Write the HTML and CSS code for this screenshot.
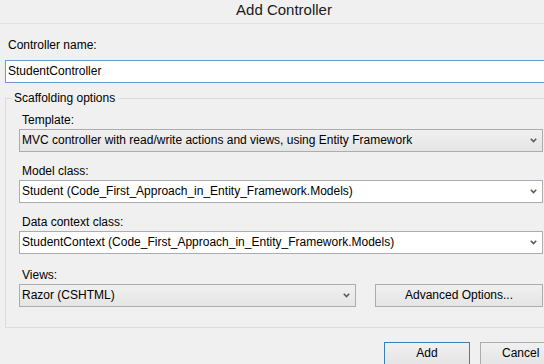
FILE: index.html
```html
<!DOCTYPE html>
<html>
<head>
<meta charset="utf-8">
<title>Add Controller</title>
<link rel="stylesheet" href="styles.css">
</head>
<body>
<div class="dialog">
  <div class="titlebar">Add Controller</div>
  <div class="content">
    <label class="name-label" for="name">Controller name:</label>
    <div class="textbox" id="name">StudentController</div>

    <fieldset class="group">
      <legend>Scaffolding options</legend>
      <div class="group-body">
        <div class="field">
          <label>Template:</label>
          <div class="combo readonly wide">
            <span>MVC controller with read/write actions and views, using Entity Framework</span>
            <svg class="arrow" width="7" height="5" viewBox="0 0 7 5"><path d="M0.8 0.8 L3.5 3.6 L6.2 0.8" fill="none" stroke="#5a5a5a" stroke-width="1.6"/></svg>
          </div>
        </div>
        <div class="field">
          <label>Model class:</label>
          <div class="combo wide">
            <span>Student (Code_First_Approach_in_Entity_Framework.Models)</span>
            <svg class="arrow" width="7" height="5" viewBox="0 0 7 5"><path d="M0.8 0.8 L3.5 3.6 L6.2 0.8" fill="none" stroke="#5a5a5a" stroke-width="1.6"/></svg>
          </div>
        </div>
        <div class="field">
          <label>Data context class:</label>
          <div class="combo wide">
            <span>StudentContext (Code_First_Approach_in_Entity_Framework.Models)</span>
            <svg class="arrow" width="7" height="5" viewBox="0 0 7 5"><path d="M0.8 0.8 L3.5 3.6 L6.2 0.8" fill="none" stroke="#5a5a5a" stroke-width="1.6"/></svg>
          </div>
        </div>
        <div class="field views">
          <label>Views:</label>
          <div class="views-row">
            <div class="combo readonly narrow">
              <span>Razor (CSHTML)</span>
              <svg class="arrow" width="7" height="5" viewBox="0 0 7 5"><path d="M0.8 0.8 L3.5 3.6 L6.2 0.8" fill="none" stroke="#5a5a5a" stroke-width="1.6"/></svg>
            </div>
            <button class="btn advanced" type="button">Advanced Options...</button>
          </div>
        </div>
      </div>
    </fieldset>

    <div class="actions">
      <button class="btn default" type="submit">Add</button>
      <button class="btn cancel" type="button">Cancel</button>
    </div>
  </div>
</div>
</body>
</html>
```

FILE: styles.css
```css
html, body { margin: 0; padding: 0; }
body { width: 544px; height: 364px; overflow: hidden; background: #f0f0f0; color: #000; font: 12px/16px "Liberation Sans", Arial, sans-serif; }

.titlebar { height: 19px; padding: 0 0 4px 24px; border-bottom: 1px solid #e3e3e3; font-size: 15px; line-height: 19px; text-align: center; color: #1a1a1a; }

/* the dialog is wider than the shot: right-hand edges are cut off */
.content { padding-left: 5px; }
.name-label { display: block; margin: 13px 0 0 3px; }
.textbox { box-sizing: border-box; width: 539px; height: 23px; margin-top: 7px; padding-left: 2px; border: 1px solid #6b9bd0; border-right: none; background: #fff; line-height: 21px; }

.group { box-sizing: border-box; width: 539px; margin: 7px 0 0; padding: 6px 0 20px; border: 1px solid #dcdcdc; border-right: none; min-width: 0; }
.group legend { margin-left: 6px; padding: 0 3px 0 2px; line-height: 16px; }
.group-body { padding-left: 13px; }

.field label { display: block; margin: 0 0 1px 3px; }
.field + .field { margin-top: 11px; }
.field.views { margin-top: 13px; }

.combo { display: flex; align-items: center; justify-content: space-between; box-sizing: border-box; height: 23px; padding: 0 5px 0 2px; border: 1px solid #abadb3; background: #fff; line-height: 21px; white-space: nowrap; }
.combo.readonly { border-color: #acacac; background: linear-gradient(#f0f0f0, #e5e5e5); }
.combo.wide { width: 524px; }
.combo.narrow { width: 337px; }
.arrow { flex: none; display: block; }

.views-row { display: flex; gap: 19px; }

.btn { box-sizing: border-box; height: 23px; margin: 0; padding: 0; border: 1px solid #acacac; background: linear-gradient(#f0f0f0, #e5e5e5); color: #000; font: 12px/21px "Liberation Sans", Arial, sans-serif; }
.btn.advanced { width: 168px; }
.btn.default { border-color: #3c7fb1; }

.actions { display: flex; gap: 10px; margin-top: 14px; padding-left: 379px; }
.actions .btn { flex: none; width: 86px; height: 22px; border-bottom: none; }
.actions .btn.cancel { width: 65px; padding-left: 21px; border-right: none; text-align: left; }
```
